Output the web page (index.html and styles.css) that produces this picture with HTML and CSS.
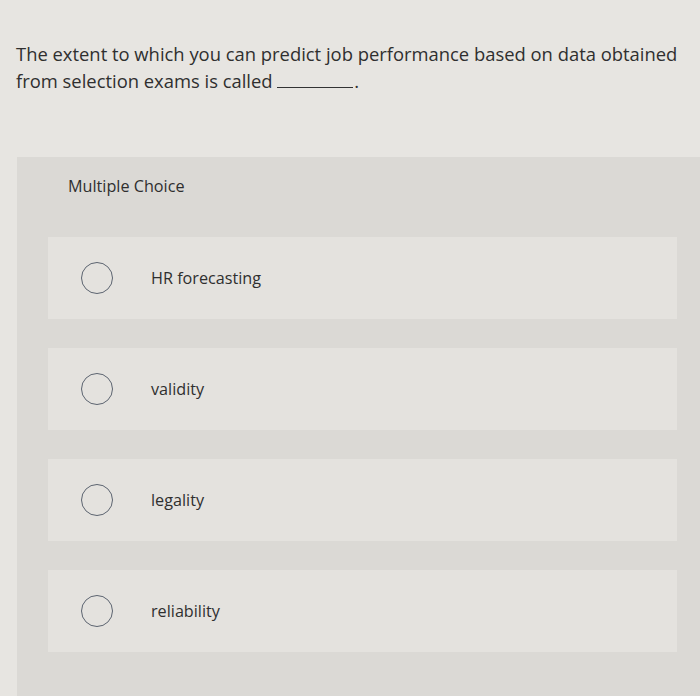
FILE: index.html
```html
<!DOCTYPE html>
<html>
<head>
<meta charset="utf-8">
<link rel="stylesheet" href="styles.css">
</head>
<body>
<div class="page">
  <p class="question"><span class="qtext">The extent to which you can predict job performance based on data obtained from selection exams is called</span> <span class="blank"></span><span class="dot">.</span></p>
  <div class="panel">
    <div class="panel-head">Multiple Choice</div>
    <div class="options">
      <div class="option"><span class="radio"></span><span class="label">HR forecasting</span></div>
      <div class="option"><span class="radio"></span><span class="label">validity</span></div>
      <div class="option"><span class="radio"></span><span class="label">legality</span></div>
      <div class="option"><span class="radio"></span><span class="label">reliability</span></div>
    </div>
  </div>
</div>
</body>
</html>
```
FILE: styles.css
```css
html, body {
  margin: 0;
  padding: 0;
  background: #e7e5e1;
}
.page {
  width: 700px;
  height: 696px;
  overflow: hidden;
  font-family: "Open Sans", Lato, sans-serif;
  color: #2f2f2f;
}
.question {
  margin: 0;
  padding: 40px 10px 0 16px;
  font-size: 18.4px;
  line-height: 27px;
  height: 117px;
  box-sizing: border-box;
}
.blank {
  display: inline-block;
  width: 76px;
  height: 1px;
  border-bottom: 1.5px solid #333;
  vertical-align: baseline;
}
.dot {
  display: inline-block;
  margin-left: 1px;
}
.panel {
  margin-left: 17px;
  margin-top: 40px;
  background: #dbd9d5;
  height: 540px;
}
.panel-head {
  padding: 18px 0 0 51px;
  height: 80px;
  box-sizing: border-box;
  font-size: 16.2px;
}
.options {
  display: flex;
  flex-direction: column;
  gap: 29px;
  padding: 0 23px 0 31px;
}
.option {
  height: 82px;
  background: #e4e2de;
  display: flex;
  align-items: center;
}
.radio {
  width: 32px;
  height: 32px;
  border: 1.5px solid #5c6470;
  border-radius: 50%;
  margin-left: 33px;
  box-sizing: border-box;
  flex: none;
}
.label {
  margin-left: 38px;
  font-size: 16.2px;
}
```
